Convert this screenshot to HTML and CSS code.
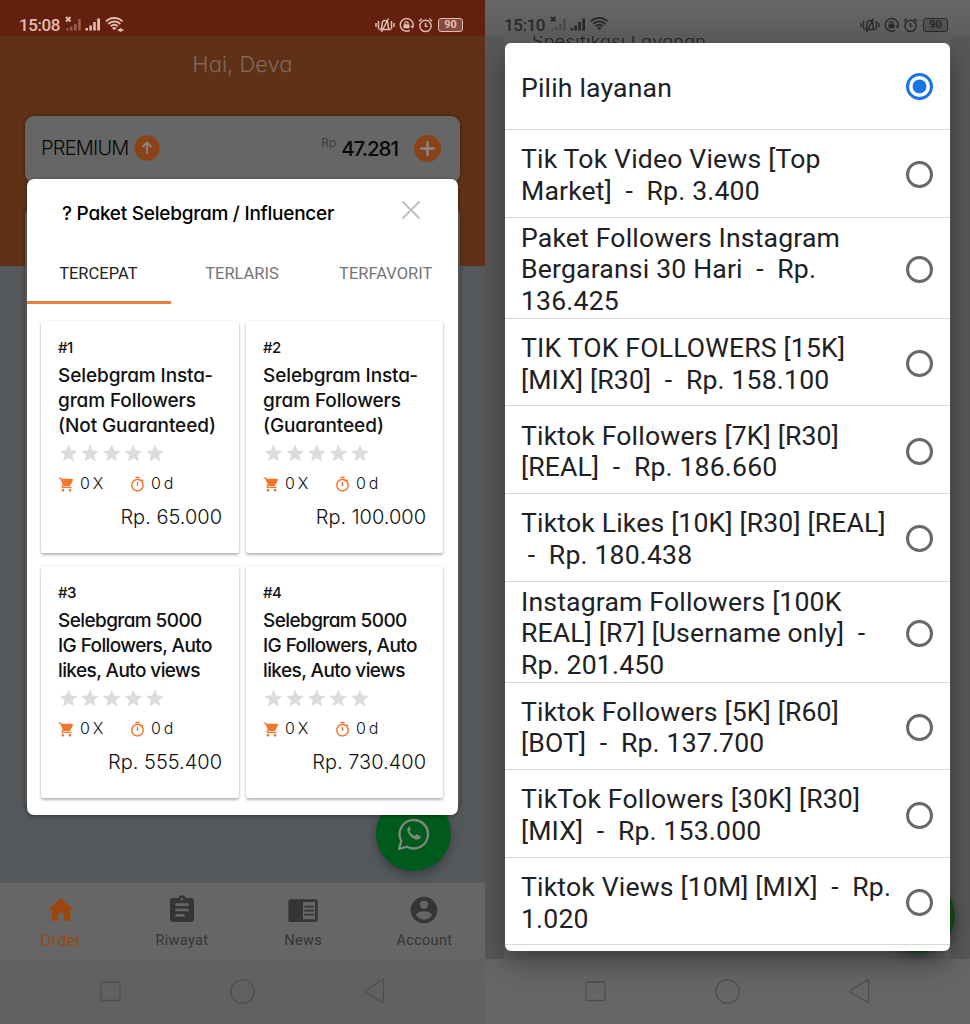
FILE: index.html
```html
<!DOCTYPE html>
<html lang="id">
<head>
    <meta charset="UTF-8">
    <meta name="viewport" content="width=device-width, initial-scale=1.0">
    <title>Layanan</title>
    <link rel="stylesheet" href="styles.css">
</head>
<body>
    <!-- shared icons -->
    <svg class="sprite">
        <symbol id="signals" viewBox="0 0 36 16">
            <path d="M1 1l4.500 4.500M5.500 1L1 5.500" stroke="currentColor" stroke-width="2"/>
            <g fill="currentColor" opacity=".4">
                <path d="M1.500 12h2v2.500h-2zM5 10.500h2.500v4H5zM9 8h2.500v6.500H9zM13.200 3h2.500v11.500h-2.500z"/>
            </g>
            <path fill="currentColor" d="M20.500 12H23v2.500h-2.500zM24.300 9.500h2.600v5h-2.600zM28.200 6h2.600v8.500h-2.600zM32.200 2.500h2.800v12h-2.800z"/>
        </symbol>
        <symbol id="wifi" viewBox="0 0 20 16">
            <g fill="none" stroke="currentColor" stroke-width="1.900">
                <path d="M1 5.500C5 .8 13.500 .8 17.500 5.500"/>
                <path d="M3.300 8c3-3.300 9-3.300 12 0"/>
                <path d="M5.800 10.300c2-2 5-2 7 0"/>
            </g>
            <path fill="currentColor" d="M9.300 14.300L7 12c1.200-1.200 3.400-1.200 4.600 0z"/>
        </symbol>
        <symbol id="vibrate" viewBox="0 0 20 16">
            <g fill="none" stroke="currentColor" stroke-width="1.500">
                <path d="M1 6v4M3.500 4v8M16.500 4v8M19 6v4"/>
                <path d="M5.500 12.500c1.500-1 1.500-3 1.500-5 0-3 1.200-4 3-4s3 1 3 4c0 2 0 4 1.500 5z"/>
                <path d="M13.500 1.500L6.500 15"/>
            </g>
        </symbol>
        <symbol id="lock" viewBox="0 0 16 16">
            <path d="M11.500 13.800A6.800 6.800 0 1 1 14.800 9.500M15.500 8l-.8 2.500-2-1.200" fill="none" stroke="currentColor" stroke-width="1.500"/>
            <path d="M4.800 7.200h6.400v4.300H4.800z" fill="currentColor"/>
            <path d="M6.300 7.500V6a1.700 1.700 0 0 1 3.400 0v1.500" fill="none" stroke="currentColor" stroke-width="1.300"/>
        </symbol>
        <symbol id="alarm" viewBox="0 0 16 16">
            <g fill="none" stroke="currentColor" stroke-width="1.500">
                <circle cx="8" cy="9" r="6"/>
                <path d="M8 5.500V9.500h2.500M1 4l3-2.700M15 4l-3-2.700"/>
            </g>
        </symbol>
        <symbol id="cart" viewBox="0 0 24 24">
            <path fill="currentColor" d="M7 18c-1.100 0-1.990.9-1.990 2S5.900 22 7 22s2-.9 2-2-.9-2-2-2zM1 2v2h2l3.600 7.590-1.350 2.450c-.16.28-.25.61-.25.96 0 1.100.9 2 2 2h12v-2H7.420c-.14 0-.25-.11-.25-.25l.03-.12.9-1.630h7.450c.75 0 1.410-.41 1.750-1.030l3.580-6.490c.08-.14.12-.31.12-.48 0-.55-.45-1-1-1H5.210l-.94-2H1zm16 16c-1.100 0-1.990.9-1.990 2s.89 2 1.990 2 2-.9 2-2-.9-2-2-2z"/>
            <path fill="currentColor" d="M6 6h15l-4 8H8z"/>
        </symbol>
        <symbol id="timer" viewBox="0 0 24 24">
            <path fill="currentColor" d="M15 1H9v2h6V1zm-4 13h2V8h-2v6zm8.030-6.610l1.420-1.420c-.43-.51-.9-.99-1.410-1.410l-1.420 1.420C16.070 4.740 14.120 4 12 4c-4.970 0-9 4.030-9 9s4.020 9 9 9 9-4.030 9-9c0-2.120-.74-4.070-1.970-5.610zM12 20c-3.870 0-7-3.130-7-7s3.130-7 7-7 7 3.130 7 7-3.130 7-7 7z"/>
        </symbol>
        <symbol id="stars" viewBox="0 0 108 20">
            <g fill="#dcdcdc">
                <path id="star" d="M10.500 1.500l2.500 6 6.300.5-4.800 4.200 1.500 6.300-5.500-3.400L5 18.500l1.500-6.300L1.700 8l6.300-.5z"/>
                <use href="#star" x="21.600"/>
                <use href="#star" x="43.200"/>
                <use href="#star" x="64.800"/>
                <use href="#star" x="86.400"/>
            </g>
        </symbol>
        <symbol id="sysnav" viewBox="0 0 485 65">
            <g fill="none" stroke="currentColor" stroke-width="1.300">
                <rect x="101" y="23" width="19" height="18.500" rx="1.500"/>
                <circle cx="242.500" cy="32.500" r="11.700"/>
                <path d="M383.500 21.500v21.500q0 1-1 .5l-16.500-10q-1.500-1 0-2l16.500-11q1-.5 1 1z"/>
            </g>
        </symbol>
    </svg>

    <div class="phone phone-left">
        <div class="statusbar">
            <span class="time">15:08</span>
            <svg class="i-signals"><use href="#signals"/></svg>
            <svg class="i-wifi"><use href="#wifi"/></svg>
            <span class="wifi-data">◂▸</span>
            <span class="spacer"></span>
            <svg class="i-vibrate"><use href="#vibrate"/></svg>
            <svg class="i-small"><use href="#lock"/></svg>
            <svg class="i-small"><use href="#alarm"/></svg>
            <span class="battery">90</span>
        </div>
        <div class="hero">
            <div class="greeting">Hai, Deva</div>
            <div class="balance">
                <span class="premium">PREMIUM</span>
                <svg class="i-round" viewBox="0 0 26 26">
                    <circle cx="13" cy="13" r="12.700" fill="#8a4319"/>
                    <path d="M13 19V8M8.500 12L13 7.500l4.500 4.500" fill="none" stroke="#888" stroke-width="1.800"/>
                </svg>
                <span class="spacer"></span>
                <span class="rp">Rp</span>
                <span class="amount">47.281</span>
                <svg class="i-round i-plus" viewBox="0 0 26 26">
                    <circle cx="13" cy="13" r="13" fill="#8a4319"/>
                    <path d="M13 7v12M7 13h12" stroke="#888" stroke-width="2.400" stroke-linecap="round"/>
                </svg>
            </div>
        </div>
        <div class="content">
            <div class="panel"></div>
        </div>
        <div class="tabbar">
            <div class="tabbar-item active">
                <svg viewBox="0 0 24 24"><path fill="currentColor" d="M10 20v-6h4v6h5v-8h3L12 3 2 12h3v8z"/></svg>
                <span>Order</span>
            </div>
            <div class="tabbar-item">
                <svg viewBox="0 0 24 24"><path fill="currentColor" d="M19 3h-4.180C14.400 1.840 13.300 1 12 1c-1.300 0-2.400.84-2.820 2H5c-1.100 0-2 .9-2 2v14c0 1.100.9 2 2 2h14c1.100 0 2-.9 2-2V5c0-1.100-.9-2-2-2zm-7 0c.55 0 1 .45 1 1s-.45 1-1 1-1-.45-1-1 .45-1 1-1zm2 14H7v-2h7v2zm3-4H7v-2h10v2zm0-4H7V7h10v2z"/></svg>
                <span>Riwayat</span>
            </div>
            <div class="tabbar-item">
                <svg viewBox="0 0 24 24">
                    <path fill="currentColor" fill-rule="evenodd" d="M2.500 4h19C22.300 4 23 4.700 23 5.500v14c0 .8-.7 1.500-1.500 1.500h-19C1.700 21 1 20.300 1 19.500v-14C1 4.700 1.700 4 2.500 4zM12 6v13h9V6z"/>
                    <path stroke="currentColor" stroke-width="1.300" d="M13 9.500h7M13 12.500h7M13 15.500h7"/>
                </svg>
                <span>News</span>
            </div>
            <div class="tabbar-item">
                <svg viewBox="0 0 24 24"><path fill="currentColor" fill-rule="evenodd" d="M12 2C6.480 2 2 6.480 2 12s4.480 10 10 10 10-4.480 10-10S17.520 2 12 2zm0 3a3 3 0 1 1 0 6 3 3 0 0 1 0-6zm0 14.200c-2.500 0-4.710-1.280-6-3.220.03-1.990 4-3.080 6-3.080s5.970 1.090 6 3.080A7.200 7.200 0 0 1 12 19.200z"/></svg>
                <span>Account</span>
            </div>
        </div>
        <svg class="sysnav"><use href="#sysnav"/></svg>

        <div class="whatsapp">
            <svg viewBox="0 0 34 34">
                <path d="M2 32l2.300-8A14.200 14.200 0 1 1 10 29.700z" fill="none" stroke="#7c8a7e" stroke-width="2.300" stroke-linejoin="round"/>
                <path d="M12 9.500c-1.500.6-2.600 2.300-2.200 4.300.8 4.300 5.200 8.700 9.800 10 2.300.5 4.500-.6 5-2.600.2-.8.100-1.300-.3-1.500l-3.600-1.700c-.6-.2-.9 0-1.300.5l-1.200 1.400c-2.900-1.200-4.800-3-6.100-5.400l1.300-1.700c.3-.4.2-.8 0-1.300l-1.300-3z" fill="#7c8a7e" transform="translate(1.500 1.200) scale(.9)"/>
            </svg>
        </div>

        <div class="modal">
            <div class="modal-head">
                <span class="modal-title">? Paket Selebgram / Influencer</span>
                <svg class="close" viewBox="0 0 20 20"><path d="M1.500 1.500l17 17M18.500 1.500l-17 17" stroke="#c4c4c4" stroke-width="2.300"/></svg>
            </div>
            <div class="tabs">
                <div class="tab selected">TERCEPAT</div>
                <div class="tab">TERLARIS</div>
                <div class="tab">TERFAVORIT</div>
            </div>
            <div class="cards">
                <div class="card">
                    <div class="num">#1</div>
                    <div class="name wide">Selebgram Insta-<br>gram Followers<br>(Not Guaranteed)</div>
                    <svg class="stars"><use href="#stars"/></svg>
                    <div class="stats"><svg><use href="#cart"/></svg><span class="sold">0 X</span><svg><use href="#timer"/></svg><span>0 d</span></div>
                    <div class="price">Rp. 65.000</div>
                </div>
                <div class="card">
                    <div class="num">#2</div>
                    <div class="name wide">Selebgram Insta-<br>gram Followers<br>(Guaranteed)</div>
                    <svg class="stars"><use href="#stars"/></svg>
                    <div class="stats"><svg><use href="#cart"/></svg><span class="sold">0 X</span><svg><use href="#timer"/></svg><span>0 d</span></div>
                    <div class="price">Rp. 100.000</div>
                </div>
                <div class="card">
                    <div class="num">#3</div>
                    <div class="name">Selebgram 5000<br>IG Followers, Auto<br>likes, Auto views</div>
                    <svg class="stars"><use href="#stars"/></svg>
                    <div class="stats"><svg><use href="#cart"/></svg><span class="sold">0 X</span><svg><use href="#timer"/></svg><span>0 d</span></div>
                    <div class="price">Rp. 555.400</div>
                </div>
                <div class="card">
                    <div class="num">#4</div>
                    <div class="name">Selebgram 5000<br>IG Followers, Auto<br>likes, Auto views</div>
                    <svg class="stars"><use href="#stars"/></svg>
                    <div class="stats"><svg><use href="#cart"/></svg><span class="sold">0 X</span><svg><use href="#timer"/></svg><span>0 d</span></div>
                    <div class="price">Rp. 730.400</div>
                </div>
            </div>
        </div>
    </div>

    <div class="phone phone-right">
        <div class="statusbar">
            <span class="time">15:10</span>
            <svg class="i-signals"><use href="#signals"/></svg>
            <svg class="i-wifi"><use href="#wifi"/></svg>
            <span class="spacer"></span>
            <svg class="i-vibrate"><use href="#vibrate"/></svg>
            <svg class="i-small"><use href="#lock"/></svg>
            <svg class="i-small"><use href="#alarm"/></svg>
            <span class="battery">90</span>
        </div>
        <div class="page">
            <div class="page-inner">Spesifikasi Layanan</div>
        </div>
        <svg class="sysnav"><use href="#sysnav"/></svg>
        <div class="whatsapp"></div>

        <div class="picker">
            <div class="option"><span>Pilih layanan</span><i class="radio checked"></i></div>
            <div class="option"><span>Tik Tok Video Views [Top<br>Market]&nbsp; -&nbsp; Rp. 3.400</span><i class="radio"></i></div>
            <div class="option"><span>Paket Followers Instagram<br>Bergaransi 30 Hari&nbsp; -&nbsp; Rp.<br>136.425</span><i class="radio"></i></div>
            <div class="option"><span>TIK TOK FOLLOWERS [15K]<br>[MIX] [R30]&nbsp; -&nbsp; Rp. 158.100</span><i class="radio"></i></div>
            <div class="option"><span>Tiktok Followers [7K] [R30]<br>[REAL]&nbsp; -&nbsp; Rp. 186.660</span><i class="radio"></i></div>
            <div class="option"><span>Tiktok Likes [10K] [R30] [REAL]<br>&nbsp;-&nbsp; Rp. 180.438</span><i class="radio"></i></div>
            <div class="option"><span>Instagram Followers [100K<br>REAL] [R7] [Username only]&nbsp; -<br>Rp. 201.450</span><i class="radio"></i></div>
            <div class="option"><span>Tiktok Followers [5K] [R60]<br>[BOT]&nbsp; -&nbsp; Rp. 137.700</span><i class="radio"></i></div>
            <div class="option"><span>TikTok Followers [30K] [R30]<br>[MIX]&nbsp; -&nbsp; Rp. 153.000</span><i class="radio"></i></div>
            <div class="option"><span>Tiktok Views [10M] [MIX]&nbsp; -&nbsp; Rp.<br>1.020</span><i class="radio"></i></div>
        </div>
    </div>
</body>
</html>
```
FILE: styles.css
```css
* {
    box-sizing: border-box;
}

body {
    margin: 0;
    width: 970px;
    height: 1024px;
    display: flex;
    overflow: hidden;
    font-family: Roboto, sans-serif;
}

.sprite {
    position: absolute;
    width: 0;
    height: 0;
}

.phone {
    position: relative;
    width: 485px;
    height: 1024px;
    display: flex;
    flex-direction: column;
    overflow: hidden;
    white-space: nowrap;
}

.spacer {
    flex: 1;
}

/* status bar */
.statusbar {
    height: 36px;
    flex: none;
    display: flex;
    align-items: center;
    padding: 14px 20px 0 19px;
}

.phone-left .statusbar {
    background: #64200f;
    color: #e0bdb3;
}

.phone-right .statusbar {
    background: linear-gradient(#666, #5e5e5e);
    color: #2a2a2a;
}

.time {
    font-size: 17px;
    font-weight: 500;
    letter-spacing: -.4px;
    width: 46px;
}

.i-signals {
    width: 36px;
    height: 16px;
    margin-top: -2px;
}

.i-wifi {
    width: 20px;
    height: 16px;
    margin: -2px 0 0 4px;
}

.wifi-data {
    font-size: 8px;
    letter-spacing: -1px;
    margin: 8px 0 0 -8px;
}

.i-vibrate {
    width: 20px;
    height: 16px;
    margin: -1px 4px 0 0;
}

.i-small {
    width: 15px;
    height: 16px;
    margin: -1px 4px 0 0;
}

.battery {
    width: 25px;
    height: 14px;
    margin: -1px 2px 0 1px;
    border: 1px solid currentColor;
    border-radius: 3px;
    background: rgba(255, 255, 255, .2);
    font-size: 11px;
    font-weight: 700;
    line-height: 12px;
    text-align: center;
}

.phone-right .battery {
    background: rgba(0, 0, 0, .15);
}

/* left screen */
.hero {
    height: 230px;
    flex: none;
    background: #5f3117;
}

.greeting, .balance, .modal-head, .cards, .page-inner {
    font-family: Inter, sans-serif;
    font-feature-settings: "cv11";
}

.greeting {
    height: 80px;
    padding-top: 14px;
    text-align: center;
    line-height: 28px;
    font-size: 22px;
    font-weight: 300;
    color: #80695c;
}

.balance {
    height: 67px;
    margin: 0 25px;
    padding: 0 19px 3px 16px;
    display: flex;
    align-items: center;
    background: #666;
    border-radius: 9px;
    box-shadow: 0 0 4px rgba(0, 0, 0, .35);
    color: #080808;
}

.premium {
    width: 93px;
    font-size: 20px;
    font-weight: 300;
    letter-spacing: -.8px;
}

.i-round {
    width: 26px;
    height: 26px;
}

.i-plus {
    width: 27px;
    height: 27px;
    margin-left: 16px;
}

.rp {
    font-size: 12px;
    font-weight: 300;
    color: #333;
    margin: -12px 5px 0 0;
}

.amount {
    font-size: 20.5px;
    font-weight: 500;
    letter-spacing: -1px;
}

.content {
    flex: 1;
    background: #54585b;
}

.panel {
    margin: -60px 25px 0;
    height: 604px;
    border-radius: 9px;
    background: #626262;
    box-shadow: 0 0 4px rgba(0, 0, 0, .3);
}

.tabbar {
    height: 76px;
    flex: none;
    display: flex;
    background: #666;
    color: #353535;
}

.tabbar-item {
    flex: 1;
    display: flex;
    flex-direction: column;
    align-items: center;
    font-size: 14.5px;
    letter-spacing: .3px;
}

.tabbar-item svg {
    width: 32px;
    height: 32px;
    margin-top: 11px;
}

.tabbar-item span {
    line-height: 20px;
    margin-top: 5px;
}

.tabbar-item.active {
    color: #9c4710;
}

.tabbar-item.active span {
    font-size: 16px;
}

.sysnav {
    width: 485px;
    height: 65px;
    flex: none;
    background: #616161;
    color: #4e4e4e;
}

.whatsapp {
    position: absolute;
    left: 376px;
    top: 796px;
    width: 75px;
    height: 75px;
    border-radius: 50%;
    background: #005a1d;
    box-shadow: 0 4px 10px rgba(0, 0, 0, .3);
    display: flex;
    justify-content: center;
    padding-top: 21px;
}

.whatsapp svg {
    width: 34px;
    height: 34px;
}

.modal {
    position: absolute;
    left: 27px;
    top: 179px;
    width: 431px;
    height: 636px;
    background: #fff;
    border-radius: 7px;
    box-shadow: 0 1px 4px rgba(0, 0, 0, .4);
}

.modal-head {
    height: 63px;
    padding: 6px 37px 0 35px;
    display: flex;
    align-items: center;
    justify-content: space-between;
}

.modal-title {
    font-size: 19px;
    font-weight: 500;
    letter-spacing: -.25px;
}

.close {
    width: 20px;
    height: 20px;
    margin-top: -8px;
}

.tabs {
    display: flex;
}

.tab {
    flex: 1;
    height: 62px;
    padding-right: 1px;
    line-height: 63px;
    text-align: center;
    font-size: 16.5px;
    letter-spacing: 0;
    color: #757575;
}

.tab.selected {
    color: #222;
    border-bottom: 3px solid #e67e3e;
}

.cards {
    display: grid;
    grid-template-columns: 198px 197px;
    grid-auto-rows: 232px;
    gap: 13px 7px;
    padding: 17px 14px;
}

.card {
    padding: 17px 17px 0 17px;
    border-radius: 2px;
    box-shadow: 0 2px 3px rgba(0, 0, 0, .28), 0 0 2px rgba(0, 0, 0, .12);
    color: #111;
}

.num {
    font-size: 15px;
    font-weight: 500;
    line-height: 20px;
    letter-spacing: -.5px;
}

.name {
    margin-top: 5px;
    font-size: 19px;
    font-weight: 500;
    line-height: 25px;
    letter-spacing: -.6px;
}

.name.wide {
    letter-spacing: -.1px;
}

.stars {
    display: block;
    width: 108px;
    height: 20px;
    margin-top: 5px;
}

.stats {
    display: flex;
    align-items: center;
    height: 20px;
    margin-top: 10px;
    font-size: 16px;
    font-weight: 300;
    letter-spacing: -.8px;
}

.stats svg {
    width: 17px;
    height: 17px;
    margin: 2px 5px 0 0;
    color: #f3762e;
}

.sold {
    width: 49px;
}

.price {
    margin-top: 11px;
    text-align: right;
    font-size: 20px;
    font-weight: 300;
    line-height: 26px;
}

/* right screen */
.page {
    flex: 1;
    padding: 0 19px;
    background: #585858;
    overflow: hidden;
}

.page-inner {
    height: 100%;
    padding-left: 28px;
    background: #606060;
    color: #222;
    font-size: 18px;
    font-weight: 300;
    letter-spacing: .3px;
    line-height: 12px;
}

.phone-right .sysnav {
    background: #666;
}

.phone-right .whatsapp {
    left: 395px;
    top: 878px;
    background: #0f5217;
}

.picker {
    position: absolute;
    left: 20px;
    top: 43px;
    width: 445px;
    height: 908px;
    background: #fff;
    border-radius: 6px;
    overflow: hidden;
    box-shadow: 0 10px 30px rgba(0, 0, 0, .38);
}

.option {
    min-height: 87.600px;
    padding: 4.200px 17px 1.200px 16px;
    display: flex;
    align-items: center;
    justify-content: space-between;
    border-bottom: 1px solid #d8d8d8;
    color: #202124;
    font-size: 26.600px;
    line-height: 31.600px;
    letter-spacing: .17px;
}

.option:first-child {
    min-height: 87px;
}

.radio {
    width: 27px;
    height: 27px;
    flex: none;
    border: 3px solid #696969;
    border-radius: 50%;
}

.radio.checked {
    margin-top: -2px;
    border-color: #1a73e8;
    background: radial-gradient(circle, #1a73e8 6.500px, #fff 7.300px);
}
```
